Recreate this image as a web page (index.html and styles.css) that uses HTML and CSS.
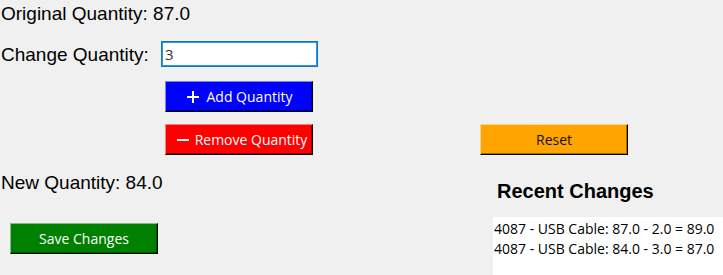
FILE: index.html
```html
<!DOCTYPE html>
<html>
<head>
<meta charset="utf-8">
<link rel="stylesheet" href="styles.css">
</head>
<body>
<div class="app">
  <div class="row r1"><span class="lbl">Original Quantity: 87.0</span></div>
  <div class="row r2">
    <span class="lbl col1">Change Quantity:</span>
    <div class="entry">3</div>
  </div>
  <div class="row r3">
    <button class="btn blue add"><svg class="ico" width="14" height="14" viewBox="0 0 14 14"><path d="M7 1V13M1 7H13" stroke="#fff" stroke-width="2"/></svg><span>Add Quantity</span></button>
  </div>
  <div class="row r4">
    <button class="btn red add rem"><svg class="ico" width="13" height="14" viewBox="0 0 13 14"><path d="M0 7H12" stroke="#fff" stroke-width="2"/></svg><span>Remove Quantity</span></button>
    <button class="btn orange reset">Reset</button>
  </div>
  <div class="row r5">
    <span class="lbl newq">New Quantity: 84.0</span>
    <h2 class="heading">Recent Changes</h2>
  </div>
  <div class="row r6">
    <button class="btn green save">Save Changes</button>
    <div class="listbox">
      <div class="item">4087 - USB Cable: 87.0 - 2.0 = 89.0</div>
      <div class="item">4087 - USB Cable: 84.0 - 3.0 = 87.0</div>
    </div>
  </div>
</div>
</body>
</html>
```

FILE: styles.css
```css
html, body {
  margin: 0;
  padding: 0;
  background: #f0f0f0;
  width: 723px;
  height: 275px;
  overflow: hidden;
}
.app {
  display: flex;
  flex-direction: column;
}
.row {
  display: flex;
  align-items: flex-start;
  flex: none;
}
.lbl {
  font-family: "Liberation Sans", Arial, sans-serif;
  font-size: 19px;
  line-height: 22px;
  color: #000;
}
.r1 { height: 41px; padding-left: 1px; box-sizing: border-box; }
.r1 .lbl { margin-top: 3px; }
.r2 { height: 40px; padding-left: 1px; box-sizing: border-box; }
.r2 .lbl { margin-top: 3px; width: 160px; }
.entry {
  width: 152px;
  height: 24px;
  background: #fff;
  border: 1px solid #0078d7;
  box-shadow: inset 0 0 0 1px #3c93e0;
  font-family: "Open Sans", sans-serif;
  font-size: 15px;
  line-height: 24px;
  color: #333;
  padding-left: 3px;
  box-sizing: content-box;
}
.r3 { height: 43px; padding-left: 165px; box-sizing: border-box; }
.r4 { height: 48px; padding-left: 165px; box-sizing: border-box; }
.btn {
  font-family: "Open Sans", sans-serif;
  font-size: 14px;
  height: 31px;
  width: 148px;
  padding: 0;
  margin: 0;
  border-style: solid;
  border-width: 1px 1px 1px 1px;
  box-sizing: border-box;
  display: flex;
  align-items: center;
  justify-content: center;
  color: #fff;
}
.ico { flex: none; margin-right: 7px; }
.blue {
  background: #0000ff;
  border-color: #7f7fff #000 #000 #7f7fff;
  box-shadow: inset -1px -1px 0 #0000a0;
}
.red {
  background: #ff0000;
  border-color: #ff8080 #000 #000 #ff8080;
  box-shadow: inset -1px -1px 0 #a00000;
}
.rem { padding-left: 6px; }
.red .ico { margin-right: 5px; }
.orange {
  background: #ffa500;
  border-color: #ffd27f #000 #000 #ffd27f;
  box-shadow: inset -1px -1px 0 #a66b00;
  color: #1a1000;
}
.green {
  background: #008000;
  border-color: #7fbf7f #000 #000 #7fbf7f;
  box-shadow: inset -1px -1px 0 #005300;
}
.reset { margin-left: 167px; }
.r5 { height: 45px; }
.newq { width: 496px; padding-left: 1px; }
.heading {
  margin: 8px 0 0 0;
  font-family: "Liberation Sans", Arial, sans-serif;
  font-weight: bold;
  font-size: 20px;
  line-height: 23px;
  color: #000;
}
.r6 { height: 60px; }
.save { margin-left: 10px; margin-top: 6px; }
.listbox {
  margin-left: 335px;
  flex: 1;
  height: 60px;
  background: #fff;
  padding-top: 2px;
  box-sizing: border-box;
}
.item {
  font-family: "Open Sans", sans-serif;
  font-size: 14px;
  line-height: 20px;
  color: #000;
  padding-left: 1px;
  white-space: nowrap;
}
```
